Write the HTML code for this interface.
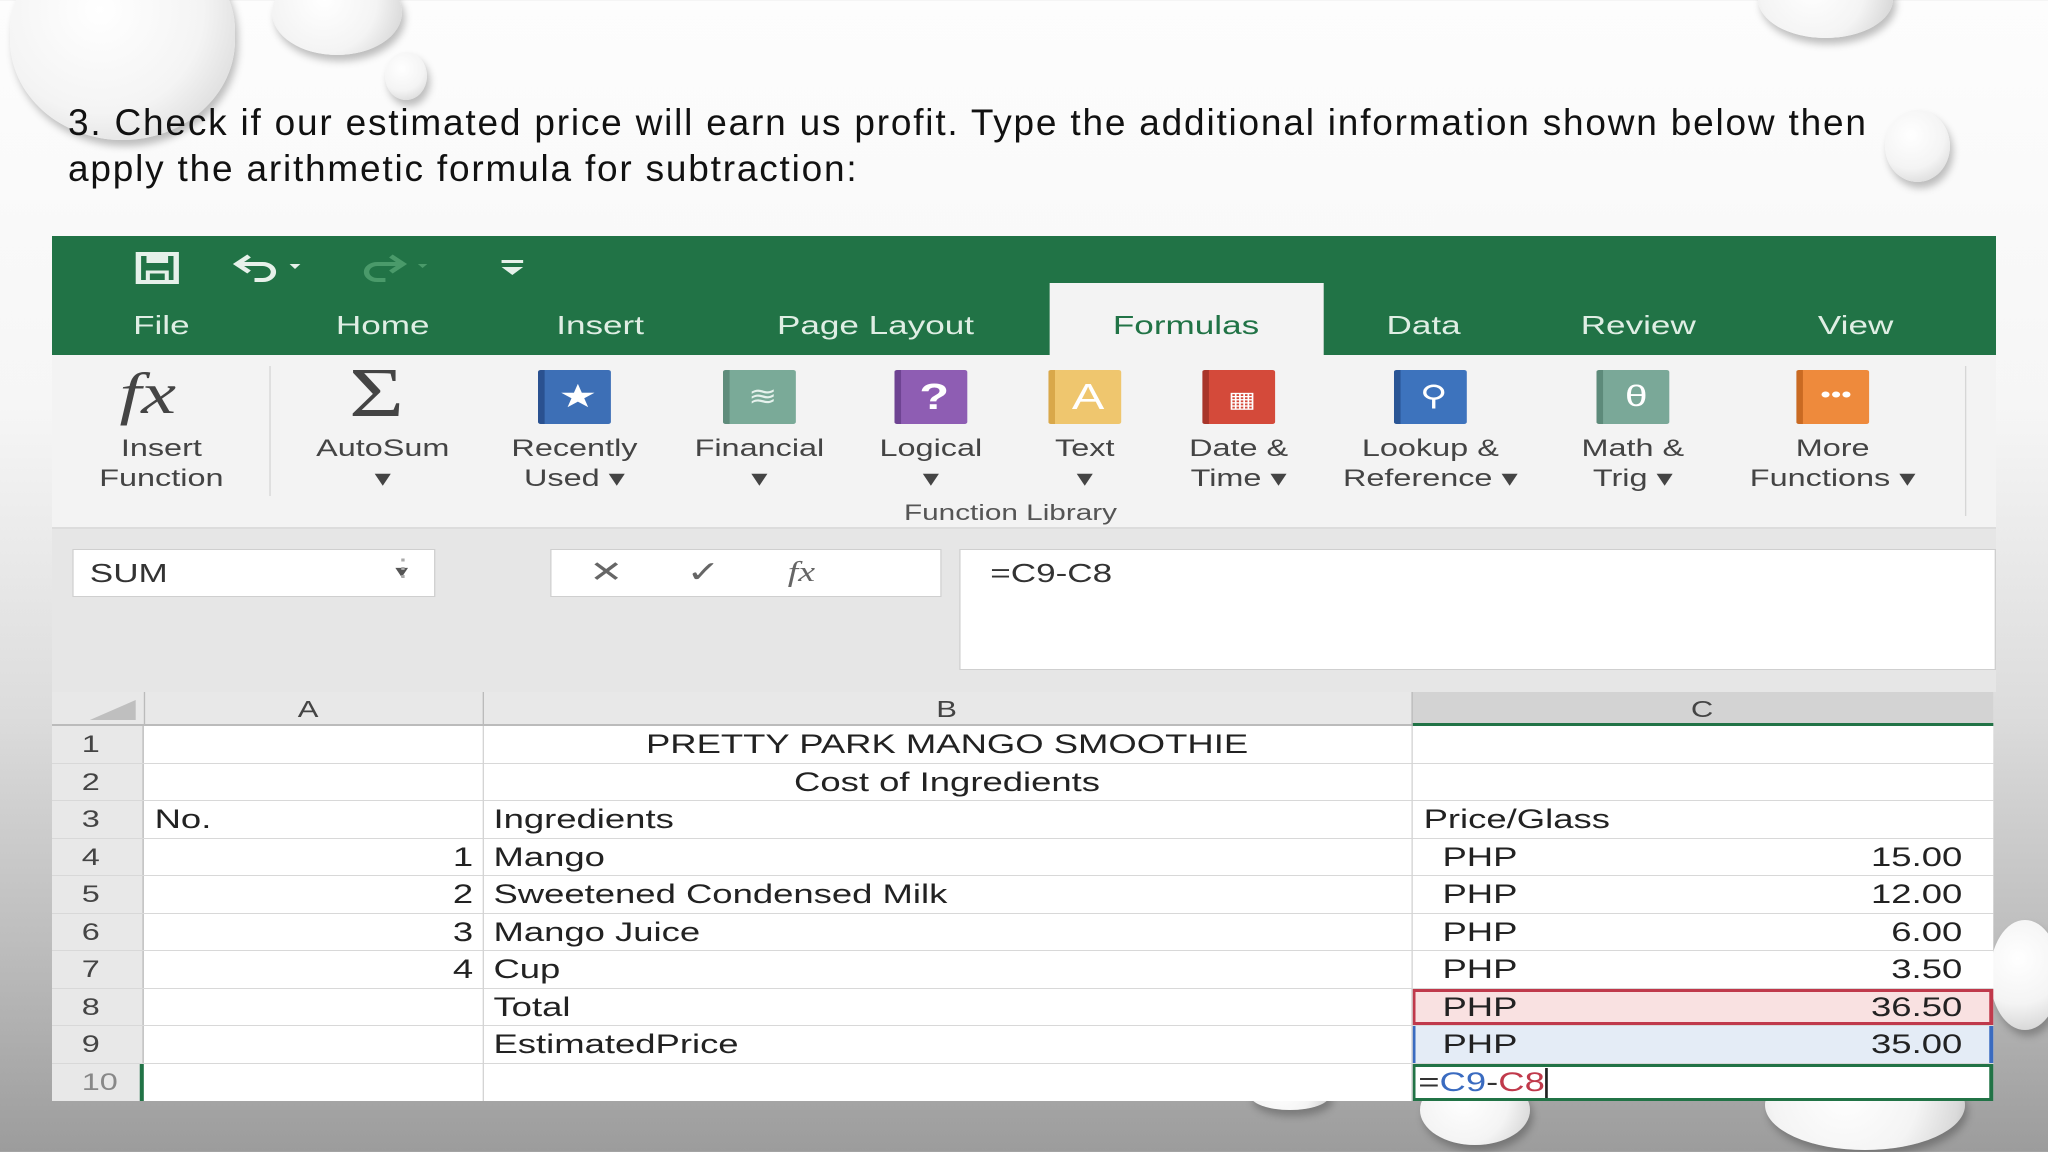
<!DOCTYPE html>
<html style="width:2048px;height:1152px;overflow:hidden"><head><meta charset="utf-8"><style>
*{margin:0;padding:0;box-sizing:border-box}
html{background:linear-gradient(180deg,#fdfdfd 0%,#f6f6f6 35%,#dcdcdc 62%,#bdbdbd 82%,#9c9c9c 100%)}
body{width:2048px;height:1152px;overflow:hidden;position:relative;font-family:"Liberation Sans",sans-serif;}
.a{position:absolute}
.drop{position:absolute;border-radius:50%;background:radial-gradient(circle at 40% 35%,#ffffff 0%,#f4f4f4 55%,#dadada 85%,#bcbcbc 100%);box-shadow:3px 6px 8px rgba(0,0,0,.25)}
#h{left:68px;top:100px;font-size:37px;line-height:46px;color:#111;width:1900px;letter-spacing:1.8px}
#x{left:52px;top:236px;width:1440px;height:865px;transform:scaleX(1.35);transform-origin:0 0;font-family:"Liberation Sans",sans-serif;color:#333}
.tab{position:absolute;top:74px;font-size:26px;color:#dfeee4;transform:translateX(-50%);white-space:nowrap}
.ic{position:absolute;top:134px;width:54px;height:54px;margin-left:-27px;border-radius:2px}
.lb{position:absolute;top:198px;font-size:24px;line-height:30px;color:#444;transform:translateX(-50%);text-align:center;white-space:nowrap}
.row{position:absolute;left:0;width:1438px;height:37.5px;border-bottom:1px solid #d8d8d8}
.rh{position:absolute;left:0;width:68px;height:100%;background:#e8e8e8;border-right:1px solid #bbb;font-size:24px;color:#444;padding-left:22px;line-height:37px}
.c{position:absolute;top:0;height:100%;font-size:27px;line-height:37px;color:#222;white-space:nowrap}
.vl{position:absolute;top:0;height:100%;width:1px;background:#d4d4d4}
</style></head><body>
<div class="drop" style="left:10px;top:-60px;width:225px;height:200px;border-radius:45% 45% 50% 50%"></div>
<div class="drop" style="left:272px;top:-30px;width:130px;height:85px"></div>
<div class="drop" style="left:385px;top:52px;width:42px;height:48px"></div>
<div class="drop" style="left:1758px;top:-40px;width:135px;height:78px"></div>
<div class="drop" style="left:1885px;top:110px;width:65px;height:72px"></div>
<div class="drop" style="left:1990px;top:920px;width:70px;height:110px"></div>
<div class="drop" style="left:1765px;top:1060px;width:200px;height:90px"></div>
<div class="drop" style="left:1420px;top:1075px;width:110px;height:70px"></div>
<div class="drop" style="left:1250px;top:1080px;width:80px;height:30px"></div>

<div class="a" id="h">3. Check if our estimated price will earn us profit. Type the additional information shown below then apply the arithmetic formula for subtraction:</div>

<div class="a" id="x">
 <div class="a" style="left:0;top:0;width:1440px;height:119px;background:#217346"></div>
 <svg class="a" style="left:60px;top:14px" width="36" height="36" viewBox="0 0 36 36"><rect x="4" y="4" width="28" height="28" fill="none" stroke="#e6f1ea" stroke-width="4"/><rect x="10" y="4" width="16" height="9" fill="#e6f1ea"/><rect x="11" y="22" width="14" height="10" fill="none" stroke="#e6f1ea" stroke-width="3"/></svg>
 <svg class="a" style="left:132px;top:14px" width="60" height="36" viewBox="0 0 60 36"><path d="M14 6 L5 14 L14 22 M5 14 H24 a8 8 0 0 1 0 16 H18" fill="none" stroke="#e6f1ea" stroke-width="4"/><path d="M44 14 l8 0 l-4 5z" fill="#e6f1ea"/></svg>
 <svg class="a" style="left:225px;top:14px" width="60" height="36" viewBox="0 0 60 36"><path d="M26 6 L35 14 L26 22 M35 14 H16 a8 8 0 0 0 0 16 H22" fill="none" stroke="#4a9a6a" stroke-width="4"/><path d="M46 14 l7 0 l-3.5 4z" fill="#4a9a6a"/></svg>
 <svg class="a" style="left:330px;top:20px" width="22" height="24" viewBox="0 0 22 24"><rect x="3" y="4" width="16" height="3" fill="#e6f1ea"/><path d="M3 11 h16 l-8 8z" fill="#e6f1ea"/></svg>
 <div class="a" style="left:739px;top:47px;width:203px;height:74px;background:#f3f3f3"></div>
 <div class="tab" style="left:81px">File</div>
 <div class="tab" style="left:245px">Home</div>
 <div class="tab" style="left:406px">Insert</div>
 <div class="tab" style="left:610px">Page Layout</div>
 <div class="tab" style="left:840px;color:#217346">Formulas</div>
 <div class="tab" style="left:1016px">Data</div>
 <div class="tab" style="left:1175px">Review</div>
 <div class="tab" style="left:1336px">View</div>
 <div class="a" style="left:0;top:119px;width:1440px;height:174px;background:#f3f3f3;border-bottom:2px solid #dcdcdc"></div>
 <div class="a" style="left:161px;top:130px;width:1px;height:130px;background:#d6d6d6"></div>
 <div class="a" style="left:1417px;top:130px;width:1px;height:150px;background:#d6d6d6"></div>
 <div class="a" style="left:50px;top:124px;font-family:'Liberation Serif',serif;font-style:italic;font-size:58px;color:#444">fx</div>
 <div class="a" style="left:220px;top:118px;font-family:'Liberation Serif',serif;font-size:70px;color:#444">Σ</div>
 <div class="ic" style="left:387px;background:#3d6fb6;border-left:5px solid #2a5190"><div style="color:#fff;font-size:32px;text-align:center;line-height:52px">★</div></div>
 <div class="ic" style="left:524px;background:#7aaa98;border-left:5px solid #5f8c7b"><div style="color:#e6f2ed;font-size:26px;text-align:center;line-height:52px">≋</div></div>
 <div class="ic" style="left:651px;background:#8e5db3;border-left:5px solid #6e4392"><div style="color:#fff;font-size:36px;font-weight:bold;text-align:center;line-height:54px">?</div></div>
 <div class="ic" style="left:765px;background:#efc66e;border-left:5px solid #d9a84a"><div style="color:#fff;font-size:36px;text-align:center;line-height:54px">A</div></div>
 <div class="ic" style="left:879px;background:#d44a3a;border-left:5px solid #a8352a"><div style="color:#fff;font-size:22px;text-align:center;line-height:60px">▦</div></div>
 <div class="ic" style="left:1021px;background:#3d73bd;border-left:5px solid #2a5595"><div style="color:#fff;font-size:28px;text-align:center;line-height:52px">⚲</div></div>
 <div class="ic" style="left:1171px;background:#7aa898;border-left:5px solid #5d8a7a"><div style="color:#fff;font-size:30px;text-align:center;line-height:54px">θ</div></div>
 <div class="ic" style="left:1319px;background:#ee8a3c;border-left:5px solid #c96a22"><div style="color:#fff;font-size:22px;text-align:center;line-height:50px">•••</div></div>
 <div class="lb" style="left:81px">Insert<br>Function</div>
 <div class="lb" style="left:245px">AutoSum<br>▾</div>
 <div class="lb" style="left:387px">Recently<br>Used ▾</div>
 <div class="lb" style="left:524px">Financial<br>▾</div>
 <div class="lb" style="left:651px">Logical<br>▾</div>
 <div class="lb" style="left:765px">Text<br>▾</div>
 <div class="lb" style="left:879px">Date &amp;<br>Time ▾</div>
 <div class="lb" style="left:1021px">Lookup &amp;<br>Reference ▾</div>
 <div class="lb" style="left:1171px">Math &amp;<br>Trig ▾</div>
 <div class="lb" style="left:1319px">More<br>Functions ▾</div>
 <div class="lb" style="left:710px;top:262px;font-size:22px;color:#555">Function Library</div>
 <div class="a" style="left:0;top:293px;width:1440px;height:163px;background:#e6e6e6"></div>
 <div class="a" style="left:15px;top:313px;width:269px;height:48px;background:#fff;border:1px solid #cfcfcf;font-size:26px;line-height:46px;padding-left:12px;color:#333">SUM<span style="position:absolute;right:16px;font-size:16px;color:#555">▼</span></div>
 <div class="a" style="left:248px;top:318px;color:#aaa;font-size:24px">⋮</div>
 <div class="a" style="left:369px;top:313px;width:290px;height:48px;background:#fff;border:1px solid #cfcfcf;color:#666;font-size:30px;line-height:46px">
  <span class="a" style="left:28px">✕</span><span class="a" style="left:100px">✓</span><span class="a" style="left:175px;font-family:'Liberation Serif',serif;font-style:italic;font-size:28px">fx</span></div>
 <div class="a" style="left:672px;top:313px;width:768px;height:121px;background:#fff;border:1px solid #cfcfcf;font-size:26px;padding:8px 0 0 22px;color:#333">=C9-C8</div>
 <div class="a" style="left:0;top:456px;width:1438px;height:34px;background:#e8e8e8;border-bottom:2px solid #bbb"></div>
 <div class="a" style="left:1007px;top:456px;width:431px;height:34px;background:#d3d3d3;border-bottom:3px solid #217346"></div>
 <svg class="a" style="left:24px;top:462px" width="40" height="24"><path d="M38 2 L38 22 L4 22z" fill="#bfbfbf"/></svg>
 <div class="a" style="left:68px;top:456px;width:1px;height:34px;background:#bbb"></div>
 <div class="a" style="left:319px;top:456px;width:1px;height:34px;background:#bbb"></div>
 <div class="a" style="left:1007px;top:456px;width:1px;height:34px;background:#bbb"></div>
 <div class="a" style="left:182px;top:460px;font-size:23px;color:#444">A</div>
 <div class="a" style="left:655px;top:460px;font-size:23px;color:#444">B</div>
 <div class="a" style="left:1214px;top:460px;font-size:23px;color:#444">C</div>
 <div class="a" style="left:0;top:490px;width:1438px;height:375px;background:#fff">
  <div class="row" style="top:0"><div class="rh">1</div><div class="c" style="left:319px;width:688px;text-align:center">PRETTY PARK MANGO SMOOTHIE</div></div>
  <div class="row" style="top:37.5px"><div class="rh">2</div><div class="c" style="left:319px;width:688px;text-align:center">Cost of Ingredients</div></div>
  <div class="row" style="top:75px"><div class="rh">3</div><div class="c" style="left:76px">No.</div><div class="c" style="left:327px">Ingredients</div><div class="c" style="left:1016px">Price/Glass</div></div>
  <div class="row" style="top:112.5px"><div class="rh">4</div><div class="c" style="left:68px;width:244px;text-align:right">1</div><div class="c" style="left:327px">Mango</div><div class="c" style="left:1030px">PHP</div><div class="c" style="left:1100px;width:315px;text-align:right">15.00</div></div>
  <div class="row" style="top:150px"><div class="rh">5</div><div class="c" style="left:68px;width:244px;text-align:right">2</div><div class="c" style="left:327px">Sweetened Condensed Milk</div><div class="c" style="left:1030px">PHP</div><div class="c" style="left:1100px;width:315px;text-align:right">12.00</div></div>
  <div class="row" style="top:187.5px"><div class="rh">6</div><div class="c" style="left:68px;width:244px;text-align:right">3</div><div class="c" style="left:327px">Mango Juice</div><div class="c" style="left:1030px">PHP</div><div class="c" style="left:1100px;width:315px;text-align:right">6.00</div></div>
  <div class="row" style="top:225px"><div class="rh">7</div><div class="c" style="left:68px;width:244px;text-align:right">4</div><div class="c" style="left:327px">Cup</div><div class="c" style="left:1030px">PHP</div><div class="c" style="left:1100px;width:315px;text-align:right">3.50</div></div>
  <div class="row" style="top:262.5px"><div class="rh">8</div><div class="c" style="left:327px">Total</div><div class="c" style="left:1007px;width:431px;background:#f9e1e1;border:3px solid #c0394b"></div><div class="c" style="left:1030px">PHP</div><div class="c" style="left:1100px;width:315px;text-align:right">36.50</div></div>
  <div class="row" style="top:300px"><div class="rh">9</div><div class="c" style="left:327px">EstimatedPrice</div><div class="c" style="left:1007px;width:431px;background:#e4ecf6;border-left:3px solid #3a6bc0;border-right:3px solid #3a6bc0"></div><div class="c" style="left:1030px">PHP</div><div class="c" style="left:1100px;width:315px;text-align:right">35.00</div></div>
  <div class="row" style="top:337.5px;border:none"><div class="rh" style="color:#888;border-right:3px solid #217346">10</div><div class="c" style="left:1007px;width:431px;border:3px solid #217346"></div><div class="c" style="left:1012px"><span style="color:#333">=</span><span style="color:#3a6bc0">C9</span><span style="color:#333">-</span><span style="color:#c0394b">C8</span><span style="display:inline-block;width:2px;height:30px;background:#222;vertical-align:middle"></span></div></div>
  <div class="vl" style="left:319px"></div><div class="vl" style="left:1007px"></div>
 </div>
</div>
</body></html>
